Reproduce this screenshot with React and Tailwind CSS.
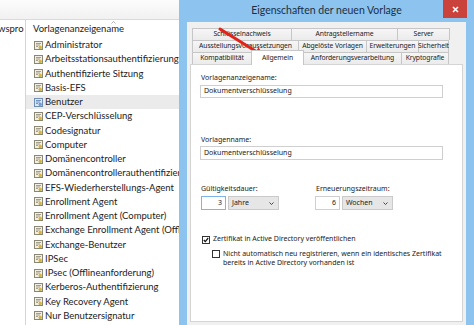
const templates = [
  "Administrator",
  "Arbeitsstationsauthentifizierung",
  "Authentifizierte Sitzung",
  "Basis-EFS",
  "Benutzer",
  "CEP-Verschlüsselung",
  "Codesignatur",
  "Computer",
  "Domänencontroller",
  "Domänencontrollerauthentifizierung",
  "EFS-Wiederherstellungs-Agent",
  "Enrollment Agent",
  "Enrollment Agent (Computer)",
  "Exchange Enrollment Agent (Offlineanforderung)",
  "Exchange-Benutzer",
  "IPSec",
  "IPsec (Offlineanforderung)",
  "Kerberos-Authentifizierung",
  "Key Recovery Agent",
  "Nur Benutzersignatur",
  "OCSP-Antwortsignatur",
];

const tabRows = [
  [
    { label: "Schlüsselnachweis", w: "w-[100px]" },
    { label: "Antragstellername", w: "w-[107px]" },
    { label: "Server", w: "w-[53px]" },
  ],
  [
    { label: "Ausstellungsvoraussetzungen", w: "w-[107px]" },
    { label: "Abgelöste Vorlagen", w: "w-[69px]" },
    { label: "Erweiterungen", w: "w-[53px]" },
    { label: "Sicherheit", w: "w-[31px]" },
  ],
  [
    { label: "Kompatibilität", w: "w-[60px]" },
    { label: "Allgemein", w: "w-[53px]", active: true },
    { label: "Anforderungsverarbeitung", w: "w-[99px]" },
    { label: "Kryptografie", w: "w-[48px]" },
  ],
];

function CertIcon({ selected }) {
  return (
    <svg width="9" height="9" viewBox="0 0 9 9" className="shrink-0">
      <rect x="0.5" y="0.5" width="8" height="8" fill={selected ? "#dbe7f5" : "#f3efe2"} stroke={selected ? "#6f8db5" : "#8b8775"} />
      <path d="M2 2.5h5M2 4h4M2 5.5h2" stroke={selected ? "#5b7fae" : "#8f8a78"} strokeWidth="0.8" />
      <circle cx="6.2" cy="6.2" r="1.6" fill={selected ? "#6f9bd1" : "#d9b33a"} />
      <path d="M5.4 7.4l-0.4 1.3M7 7.4l0.4 1.3" stroke="#5c9a3c" strokeWidth="0.8" />
    </svg>
  );
}

function TemplateList() {
  return (
    <div className="flex flex-col h-full text-[9.5px] text-[#222]" style={{ fontFamily: 'Lato, "Noto Sans", sans-serif' }}>
      <div className="h-[20px] shrink-0 bg-gradient-to-b from-[#fcfcfc] to-[#f1f1f1] border-b border-[#dadada]" />
      <div className="flex flex-1 min-h-0">
        <div className="w-[26px] shrink-0 border-r border-[#d5d5d5] overflow-hidden">
          <div className="h-[18px] pt-[1px] flex items-center whitespace-nowrap -ml-[2px]">wspro</div>
        </div>
        <div className="flex-1 min-w-0 overflow-hidden">
          <div className="h-[18px] pt-[1px] flex items-center pl-[7px] relative">
            Vorlagenanzeigename
            <svg width="5" height="3" viewBox="0 0 5 3" className="absolute left-[85px] top-[1px]">
              <path d="M0.5 2.5L2.5 0.5L4.5 2.5" stroke="#9a9a9a" fill="none" strokeWidth="0.8" />
            </svg>
          </div>
          {templates.map((t) => (
            <div
              key={t}
              className={`h-[14.25px] flex items-center gap-[2px] pl-[8px] whitespace-nowrap ${t === "Benutzer" ? "bg-[#ebebeb]" : ""}`}
            >
              <CertIcon selected={t === "Benutzer"} />
              <span>{t}</span>
            </div>
          ))}
        </div>
      </div>
    </div>
  );
}

function Field({ value, className, focused, right }) {
  return (
    <div
      className={`h-full bg-white border flex items-center px-[3px] ${right ? "justify-end" : ""} ${focused ? "border-[#7eb4ea]" : "border-[#cfcfcf]"} ${className}`}
    >
      {value}
    </div>
  );
}

function Select({ value, className }) {
  return (
    <div className={`h-full bg-[#e6e6e6] border border-[#cacaca] flex items-center justify-between pl-[3px] pr-[4px] ${className}`}>
      <span>{value}</span>
      <svg width="5" height="3" viewBox="0 0 5 3">
        <path d="M0.5 0.5L2.5 2.5L4.5 0.5" stroke="#333" fill="none" strokeWidth="0.9" />
      </svg>
    </div>
  );
}

function Checkbox({ checked }) {
  return (
    <div className="w-[8px] h-[8px] shrink-0 border border-[#333] bg-white flex items-center justify-center">
      {checked && (
        <svg width="6" height="6" viewBox="0 0 6 6">
          <path d="M0.8 3L2.3 4.6L5.2 1" stroke="#111" fill="none" strokeWidth="1.2" />
        </svg>
      )}
    </div>
  );
}

function TemplateDialog() {
  return (
    <div className="absolute left-[179px] top-0 w-[295px] h-[325px] bg-[#8cc3ef] flex flex-col">
      <div
        className="h-[22px] shrink-0 relative flex items-center justify-center text-[10.5px] text-[#1d2f44]"
        style={{ fontFamily: 'Lato, "Noto Sans", sans-serif' }}
      >
        Eigenschaften der neuen Vorlage
        <div className="absolute right-[7px] top-0 w-[24px] h-[18px] bg-[#c9433c] flex items-center justify-center">
          <svg width="7" height="7" viewBox="0 0 7 7">
            <path d="M1 1L6 6M6 1L1 6" stroke="#fff" strokeWidth="1.5" />
          </svg>
        </div>
      </div>
      <div className="flex-1 min-h-0 mx-[8px] bg-[#f0f0f0] pt-[6px] px-[3px] pb-[3px] flex flex-col text-[7px] text-[#1a1a1a]">
        <div className="ml-[2px] flex flex-col text-[6.8px]">
          {tabRows.map((row, i) => (
            <div key={i} className="flex h-[12px] items-end">
              {row.map((tab) => (
                <div
                  key={tab.label}
                  className={`${tab.w} shrink-0 -mr-px border border-[#c6c6c6] flex items-center justify-center whitespace-nowrap tracking-[-0.1px] ${
                    tab.active
                      ? "relative z-10 h-[15px] -mb-px border-b-0 bg-white"
                      : "h-[12px] border-b-0 bg-gradient-to-b from-[#f6f6f6] to-[#ebebeb]"
                  }`}
                >
                  {tab.label}
                </div>
              ))}
            </div>
          ))}
        </div>
        <div className="flex-1 min-h-0 bg-white border border-[#d4d4d4] pl-[9px] pt-[8px] flex flex-col">
          <div className="h-[9px] leading-[9px] pl-[1px]">Vorlagenanzeigename:</div>
          <div className="mt-[3px] h-[13px] w-[243px]">
            <Field value="Dokumentverschlüsselung" />
          </div>
          <div className="mt-[37px] h-[9px] leading-[9px] pl-[1px]">Vorlagenname:</div>
          <div className="mt-[2px] h-[14px] w-[243px]">
            <Field value="Dokumentverschlüsselung" />
          </div>
          <div className="mt-[24px] flex">
            <div className="w-[115px] shrink-0 flex flex-col">
              <div className="h-[9px] leading-[9px] pl-[1px]">Gültigkeitsdauer:</div>
              <div className="mt-[3px] h-[14px] flex gap-[2px] pl-[1px]">
                <Field value="3" right focused className="w-[25px]" />
                <Select value="Jahre" className="w-[51px]" />
              </div>
            </div>
            <div className="flex flex-col">
              <div className="h-[9px] leading-[9px] pl-[1px]">Erneuerungszeitraum:</div>
              <div className="mt-[3px] h-[14px] flex gap-[2px]">
                <Field value="6" right className="w-[25px]" />
                <Select value="Wochen" className="w-[51px]" />
              </div>
            </div>
          </div>
          <div className="mt-[25px] h-[9px] flex items-center gap-[3px] pl-[2px]">
            <Checkbox checked />
            <span>Zertifikat in Active Directory veröffentlichen</span>
          </div>
          <div className="mt-[5px] flex gap-[3px] pl-[12px]">
            <div className="pt-[0.5px]">
              <Checkbox />
            </div>
            <div className="leading-[9px]">
              Nicht automatisch neu registrieren, wenn ein identisches Zertifikat
              <br />
              bereits in Active Directory vorhanden ist
            </div>
          </div>
        </div>
      </div>
    </div>
  );
}

export default function App() {
  return (
    <div
      className="relative w-[474px] h-[325px] overflow-hidden bg-white"
      style={{ fontFamily: '"Noto Sans", "Open Sans", sans-serif' }}
    >
      <TemplateList />
      <TemplateDialog />
      <svg className="absolute inset-0 pointer-events-none" width="474" height="325">
        <line x1="220" y1="29" x2="257" y2="52" stroke="#e2231a" strokeWidth="3" strokeLinecap="round" />
        <polygon points="266,58 253,56 258.5,47.4" fill="#e2231a" />
      </svg>
    </div>
  );
}
